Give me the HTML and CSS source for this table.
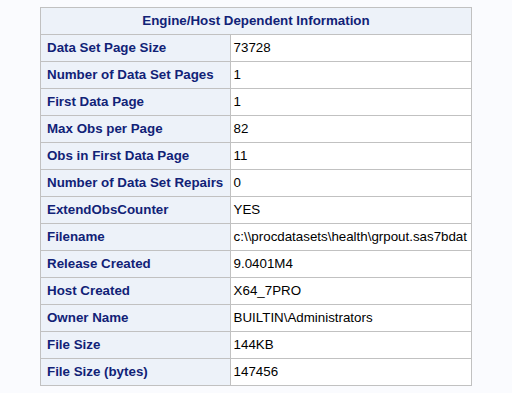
FILE: index.html
```html
<!DOCTYPE html>
<html lang="en">
<head>
    <meta charset="UTF-8">
    <meta name="viewport" content="width=device-width, initial-scale=1.0">
    <title>Engine/Host Dependent Information</title>
    <link rel="stylesheet" href="styles.css">
</head>
<body>

    <table class="table">
        <thead>
            <tr>
                <th class="header" colspan="2">Engine/Host Dependent Information</th>
            </tr>
        </thead>
        <tbody>
            <tr><th class="rowheader">Data Set Page Size</th><td class="data">73728</td></tr>
            <tr><th class="rowheader">Number of Data Set Pages</th><td class="data">1</td></tr>
            <tr><th class="rowheader">First Data Page</th><td class="data">1</td></tr>
            <tr><th class="rowheader">Max Obs per Page</th><td class="data">82</td></tr>
            <tr><th class="rowheader">Obs in First Data Page</th><td class="data">11</td></tr>
            <tr><th class="rowheader">Number of Data Set Repairs</th><td class="data">0</td></tr>
            <tr><th class="rowheader">ExtendObsCounter</th><td class="data">YES</td></tr>
            <tr><th class="rowheader">Filename</th><td class="data">c:\\procdatasets\health\grpout.sas7bdat</td></tr>
            <tr><th class="rowheader">Release Created</th><td class="data">9.0401M4</td></tr>
            <tr><th class="rowheader">Host Created</th><td class="data">X64_7PRO</td></tr>
            <tr><th class="rowheader">Owner Name</th><td class="data">BUILTIN\Administrators</td></tr>
            <tr><th class="rowheader">File Size</th><td class="data">144KB</td></tr>
            <tr><th class="rowheader">File Size (bytes)</th><td class="data">147456</td></tr>
        </tbody>
    </table>

</body>
</html>
```

FILE: styles.css
```css
body {
    margin: 0;
    padding: 7px 0;
    background-color: #fafbfe;
    font-family: "Liberation Sans", Arial, sans-serif;
    font-size: 13.33px;
}
.table {
    margin: 0 auto;
    border-collapse: collapse;
    border: 1px solid #c1c1c1;
    width: 432px;
}
.table th, .table td {
    border: 1px solid #c1c1c1;
    padding: 5px 6px;
    height: 16px;
    line-height: 16px;
    text-align: left;
    white-space: nowrap;
}
.header {
    background-color: #edf2f9;
    color: #112277;
    font-weight: bold;
    text-align: center !important;
}
.rowheader {
    background-color: #edf2f9;
    color: #112277;
    font-weight: bold;
    width: 177px;
}
.table .data {
    background-color: #ffffff;
    color: #000000;
    padding: 5px 4px 5px 3px;
}
```
